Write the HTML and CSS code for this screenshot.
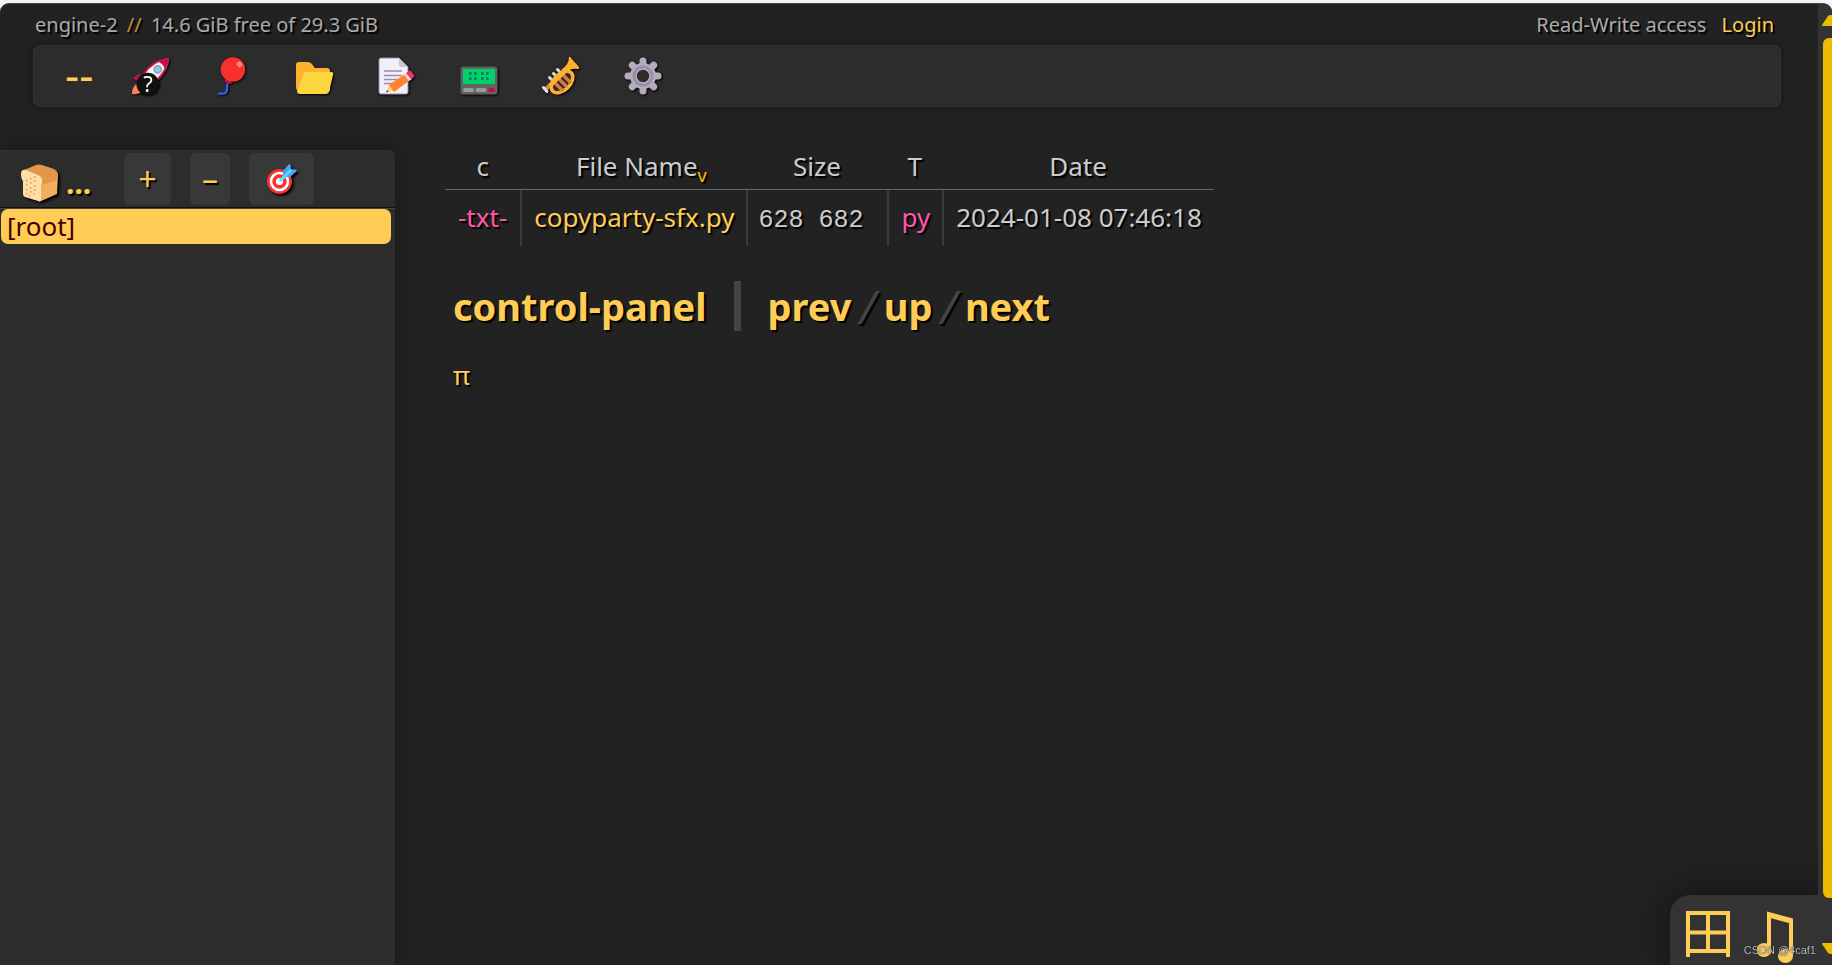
FILE: index.html
```
<!DOCTYPE html>
<html lang="en">
<head>
<meta charset="utf-8">
<title>engine-2</title>
<link rel="stylesheet" href="styles.css">
</head>
<body>
<div class="page">
	<div class="content">
		<header class="top">
			<div class="status">
				<span>engine-2 <i>//</i> 14.6 GiB free of 29.3 GiB</span>
				<span class="acct">Read-Write access <a href="#login">Login</a></span>
			</div>
			<nav class="ops">
				<a class="hide" href="#" title="hide">--</a>
				<a href="#search" title="search">
					<svg viewBox="0 0 38 38">
						<path fill="#ff8257" d="M6 26C2 28 0 32 0 37q6 1 10-3z"/>
						<path fill="#c5104a" d="M14 15Q5 17 1 21l5 4zM23 26q-1 9-5 12l-4-6z"/>
						<path fill="#f4f4f4" d="M8 26C12 13 23 3 37 1 36 14 27 25 14 31z"/>
						<path fill="#c5104a" d="M25 4Q31 1 36 1q2 0 1 3-1 5-4 9-1-6-8-9z"/>
						<path fill="none" stroke="#c5104a" stroke-width="2" d="M8 24Q15 8 29 3M34 11Q29 20 23 25"/>
						<circle cx="25.700" cy="12.300" r="3.600" fill="#83cbff" stroke="#9b9b9b" stroke-width="1.500"/>
						<circle cx="15.700" cy="27" r="11.300" fill="#111"/>
						<text x="16" y="35" text-anchor="middle">?</text>
					</svg>
				</a>
				<a href="#unpost" title="unpost">
					<svg viewBox="0 0 38 38">
						<path fill="none" stroke="#3f5fff" stroke-width="2" stroke-linecap="round" d="M14 25q-1 3-1 6 0 5-3 5.500H5"/>
						<path fill="#ca0b4a" d="M11 22l7 3-1 2-6-2z"/>
						<circle cx="19" cy="12.500" r="12.200" fill="#f8312f"/>
						<ellipse cx="25.500" cy="7.500" rx="3" ry="2.500" fill="#ff8687" transform="rotate(45 25.500 7.500)"/>
					</svg>
				</a>
				<a href="#up" title="upload">
					<svg viewBox="0 0 38 38">
						<path fill="#ffb02e" d="M0 8q0-3 3-3h9q2 0 4 2l3 4h12q3 0 3 3v20H4q-4 0-4-4z"/>
						<path fill="#fcd53f" d="M7 18q1-3 4-3h24q3 0 2 3l-4 17q-1 2-3 2H4q-3 0-3-3z"/>
					</svg>
				</a>
				<a href="#new_md" title="new markdown">
					<svg viewBox="0 0 38 38">
						<path fill="#f3eef8" stroke="#9b8fa6" d="M3 1h18l9 9v25q0 2-2 2H3q-2 0-2-2V3q0-2 2-2z"/>
						<path fill="#cdc4d6" d="M21 1l9 9h-7q-2 0-2-2z"/>
						<path stroke="#9b8fa6" stroke-width="1.500" d="M6 14h18M6 18.500h18M6 22.500h16M6 26.500h11"/>
						<path fill="#ffcf8a" d="M11 28L8 35.500 17 33z"/>
						<path fill="#7d4533" d="M9 33l-1 2.500 3-1z"/>
						<path fill="#ff822d" d="M11 28L27 17l5 6-16 12z"/>
						<path fill="#e2dce6" d="M26 18l3-2 5 6-3 2z"/>
						<path fill="#f8315f" d="M28 16l3-2q1-1 2 0l3 4q1 1 0 2l-3 2z"/>
					</svg>
				</a>
				<a href="#msg" title="message">
					<svg viewBox="0 0 38 38">
						<rect x="0.500" y="9.500" width="37" height="28" rx="3" fill="#636363"/>
						<rect x="3" y="12" width="32" height="15" rx="1" fill="#00d26a"/>
						<path stroke="#008463" stroke-width="2.600" stroke-dasharray="3 2" d="M10.300 15v9M15.300 15v9M22.300 15v9M27.300 15v9"/>
						<rect x="3" y="31" width="11" height="4" rx="2" fill="#9b9b9b"/>
						<rect x="15.500" y="31" width="11" height="4" rx="2" fill="#9b9b9b"/>
						<rect x="28" y="31" width="7" height="4" rx="2" fill="#ca0b4a"/>
					</svg>
				</a>
				<a href="#player" title="media player">
					<svg viewBox="0 0 38 38">
						<path stroke="#d3883e" stroke-width="4" d="M4 32l8-8"/>
						<path stroke="#e1e1e6" stroke-width="3" stroke-linecap="round" d="M1.500 30.500l3.500 4M7.500 20.500l2 2M11.500 16.500l2 2M15.500 12.500l2 2"/>
						<path stroke="#c3c0cc" stroke-width="2" d="M9 22l4 4M13 18l4 4M17 14l4 4"/>
						<ellipse cx="20" cy="25" rx="13" ry="8" fill="#2c2c2c" stroke="#ffb02e" stroke-width="3.600" transform="rotate(-45 20 25)"/>
						<path stroke="#d67d3e" stroke-width="3.200" d="M12 25l9 9M16 21l9 9M20 17l9 9"/>
						<path fill="none" stroke="#ffb02e" stroke-width="3.600" d="M8 29L28 10"/>
						<path fill="#ffb02e" d="M27 0q1-1 2 1l8 9q1 2-2 2-6-1-12 4l-4-3Q27 8 27 0z"/>
					</svg>
				</a>
				<a href="#cfg" title="settings">
					<svg viewBox="-19 -19 38 38">
						<g stroke="#b4acbc" stroke-width="7" stroke-linecap="round">
							<path d="M0-15V15M-15 0H15M-10.700-10.700L10.700 10.700M-10.700 10.700L10.700-10.700"/>
						</g>
						<circle r="13" fill="#b4acbc"/>
						<circle r="8.500" fill="#2c2c2c" stroke="#998ea4" stroke-width="4"/>
						<circle r="7" fill="none" stroke="#b4acbc" stroke-width="1.500"/>
					</svg>
				</a>
			</nav>
		</header>

		<div class="cols">
			<aside class="tree">
				<div class="treebar">
					<a class="crumbs" href="#bc" title="breadcrumbs">
						<svg viewBox="0 0 38 38">
							<path fill="#f3ad61" d="M20 15l17-5-1 20-18 8z"/>
							<path fill="#e19747" d="M3 6L15 1q3-1 6 0l12 4q4 2 4 6 0 4-3 6l-13 4L8 8z"/>
							<path fill="#ffdea7" d="M0 10q0-5 5-4l12 5q5 2 4 8-1 2-1 3v13q0 3-3 2L4 33q-2-1-2-3V17q-2-2-2-7z"/>
							<path stroke="#e19747" stroke-width="1.500" stroke-dasharray="1.500 3" d="M5 17l11-5M5 21l11-5M5 26l11-5M5 30l11-5M8 32l8-3"/>
						</svg>
						<span>...</span>
					</a>
					<a class="btn" href="#grow">+</a>
					<a class="btn slim" href="#shrink">–</a>
					<a class="btn wide" href="#here" title="show current folder">
						<svg viewBox="0 0 32 32">
							<circle cx="13.500" cy="18.500" r="12.500" fill="#f8312f"/>
							<circle cx="13.500" cy="18.500" r="8.500" fill="none" stroke="#fff" stroke-width="2.600"/>
							<circle cx="13.500" cy="18.500" r="3.600" fill="#fff"/>
							<path stroke="#50e2ff" stroke-width="3" stroke-linecap="round" d="M15 17l7-7"/>
							<path fill="#46a4fb" d="M17 8l6-7q2 0 2 5 5 0 6 2l-7 6q-5 1-7-1z"/>
							<path stroke="#50e2ff" stroke-width="2.500" d="M16 16l9-9"/>
						</svg>
					</a>
				</div>
				<a class="root" href="#/">[root]</a>
			</aside>

			<main class="wrap">
				<table class="files">
					<thead>
						<tr>
							<th>c</th>
							<th class="name">File Name<sub>v</sub></th>
							<th>Size</th>
							<th>T</th>
							<th>Date</th>
						</tr>
					</thead>
					<tbody>
						<tr>
							<td><a class="doc" href="#txt">-txt-</a></td>
							<td><a href="#copyparty-sfx.py">copyparty-sfx.py</a></td>
							<td class="size">628 682</td>
							<td class="ext">py</td>
							<td>2024-01-08 07:46:18</td>
						</tr>
					</tbody>
				</table>
				<h2 class="goh">
					<a class="cp" href="#cp">control-panel</a>
					<a href="#prev">prev</a><i>/</i><a href="#parent">up</a><i>/</i><a href="#next">next</a>
				</h2>
				<a class="epi" href="#pi">π</a>
			</main>
		</div>
	</div>

	<div class="scroll">
		<svg viewBox="0 0 10 11"><path d="M0 11q0-2 2-4l4-6q1-1 3-1h1v11z"/></svg>
		<div class="thumb"></div>
		<svg viewBox="0 0 10 11"><path d="M0 0q0 2 2 4l4 6q1 1 3 1h1V0z"/></svg>
	</div>
</div>

<div class="widget">
	<a href="#grid" title="grid view">
		<svg viewBox="0 0 44 46"><path d="M2 46V2h40v44M2 21.500h40M2 40h40M22 2v38"/></svg>
	</a>
	<a href="#np" title="player">
		<svg viewBox="0 0 38 52">
			<path d="M12 38V3l22 6v36M12 4.500l22 6"/>
			<g class="head"><ellipse cx="7" cy="39" rx="7.500" ry="7"/><ellipse cx="28.500" cy="45" rx="7.500" ry="7"/></g>
		</svg>
	</a>
	<span class="mark">CSDN @4caf1</span>
</div>
</body>
</html>
```
FILE: styles.css
```
html {
	background: #f4f4f4;
}
body {
	margin: 0;
	padding-top: 3px;
	font: 26px/36px "Noto Sans", "Open Sans", sans-serif;
	color: #ccc;
	text-shadow: 2px 2px 1px #000;
}
a {
	color: #fc5;
	text-decoration: none;
}
svg {
	display: block;
}
.page {
	display: flex;
	min-height: calc(100vh - 3px);
	background: #222;
	border-top: 1px solid #444;
	border-radius: 9px 9px 0 0;
	box-sizing: border-box;
	overflow: hidden;
}
.content {
	flex: 1;
	display: flex;
	flex-direction: column;
}

/* status line + tabs */
.top {
	margin: 5px 37px 0 33px;
}
.status {
	display: flex;
	justify-content: space-between;
	padding: 0 7px 0 2px;
	font-size: 20px;
	line-height: 32px;
	color: #aaa;
}
.status i {
	margin: 0 4px;
	font-style: normal;
	color: #c83;
}
.acct a {
	margin-left: 10px;
}
.ops {
	display: flex;
	align-items: center;
	height: 60px;
	margin-top: 4px;
	background: #2c2c2c;
	border: 1px solid #333;
	border-radius: 7px;
	box-shadow: 0 0 10px #181818;
}
.ops a {
	padding: 0 22px;
}
.ops svg {
	width: 38px;
	height: 38px;
	overflow: visible;
	filter: drop-shadow(1px 1px 1px #000);
}
.ops text {
	font: 22px "Noto Sans", sans-serif;
	fill: #fff;
	text-shadow: none;
}
.ops .hide {
	padding: 0 17px 4px 31px;
	font-size: 44px;
	text-shadow: none;
}

/* directory tree */
.cols {
	flex: 1;
	display: flex;
	margin-top: 43px;
}
.tree {
	flex: 0 0 395px;
	box-sizing: border-box;
	background: #2c2c2c;
	border-top: 1px solid #333;
	border-radius: 0 7px 0 0;
	box-shadow: 0 0 20px #181818;
}
.treebar {
	display: flex;
	align-items: center;
	height: 56px;
	border-bottom: 1px solid #111;
	box-shadow: 0 1px #444;
}
.crumbs {
	display: flex;
	align-items: center;
	width: 103px;
	padding: 8px 0 0 21px;
	box-sizing: border-box;
	font-size: 30px;
	font-weight: bold;
	margin-right: 21px;
}
.crumbs svg {
	width: 38px;
	height: 38px;
	margin-right: 7px;
	filter: drop-shadow(2px 2px 1px #000);
}
.btn {
	display: flex;
	align-items: center;
	justify-content: center;
	width: 47px;
	height: 52px;
	margin-right: 19px;
	background: #383838;
	border-radius: 6px;
	font-size: 32px;
}
.btn.slim {
	width: 40px;
}
.btn.wide {
	width: 65px;
}
.btn svg {
	width: 32px;
	height: 32px;
	filter: drop-shadow(2px 2px 1px #000);
}
.root {
	display: block;
	margin: 1px 4px 0 1px;
	padding-left: 6px;
	line-height: 35px;
	color: #400;
	background: #fc5;
	border-radius: 7px;
	text-shadow: none;
}

/* file list */
.wrap {
	padding-left: 50px;
}
.files {
	border-spacing: 0;
}
.files th {
	padding: 0 12px 7px;
	font-weight: normal;
	line-height: 32px;
	border-bottom: 1px solid #666;
}
.files .name {
	padding-left: 28px;
}
.files sub {
	font-size: 18px;
	line-height: 0;
	color: #fb0;
}
.files td {
	padding: 9px 12px 7px;
	border-left: 2px solid #3a3a3a;
	vertical-align: baseline;
	white-space: nowrap;
}
.files td:first-child {
	padding: 9px 13px 7px;
	border-left: 0;
}
.files td:last-child {
	border-radius: 0 0 7px 0;
	box-shadow: 0 1px #1e1e1e;
}
.files .size {
	padding-left: 10px;
	padding-right: 24px;
	font: 25px/36px "Liberation Mono", monospace;
}
.files .doc,
.files .ext {
	color: #f5a;
}
.goh {
	display: flex;
	align-items: center;
	margin: 35px 0 0 8px;
	font-size: 38px;
	line-height: 50px;
}
.goh .cp {
	padding-right: 27px;
	margin-right: 27px;
	border-right: 7px solid #444;
}
.goh i {
	margin: 0 8px;
	font-size: 46px;
	font-weight: normal;
	color: #444;
}
.epi {
	display: inline-block;
	margin: 26px 0 0 8px;
}

/* page scrollbar */
.scroll {
	position: relative;
	z-index: 2;
	display: flex;
	flex-direction: column;
	align-items: flex-end;
	width: 14px;
	padding: 11px 0;
	background: #333;
	box-sizing: border-box;
}
.scroll svg {
	width: 10px;
	height: 11px;
	fill: #eb0;
}
.thumb {
	flex: 1;
	width: 9px;
	margin: 12px 0 45px;
	background: #eb0;
	border-radius: 6px 0 0 6px;
}

/* corner widget */
.widget {
	position: fixed;
	right: 0;
	bottom: 0;
	display: flex;
	gap: 27px;
	padding: 16px 37px 0 16px;
	height: 54px;
	background: #333;
	border-radius: 20px 0 0 0;
	box-shadow: 0 0 40px #111;
}
.widget svg {
	width: 44px;
	height: 46px;
	fill: none;
	stroke: #fc5;
	stroke-width: 4;
}
.widget a + a svg {
	width: 38px;
	height: 52px;
}
.widget .head {
	fill: #fc5;
	stroke: none;
}
.mark {
	position: absolute;
	right: 16px;
	bottom: 8px;
	font: 11px/14px "Liberation Sans", sans-serif;
	color: #bbb;
	text-shadow: 0 0 1px #000;
}
```
